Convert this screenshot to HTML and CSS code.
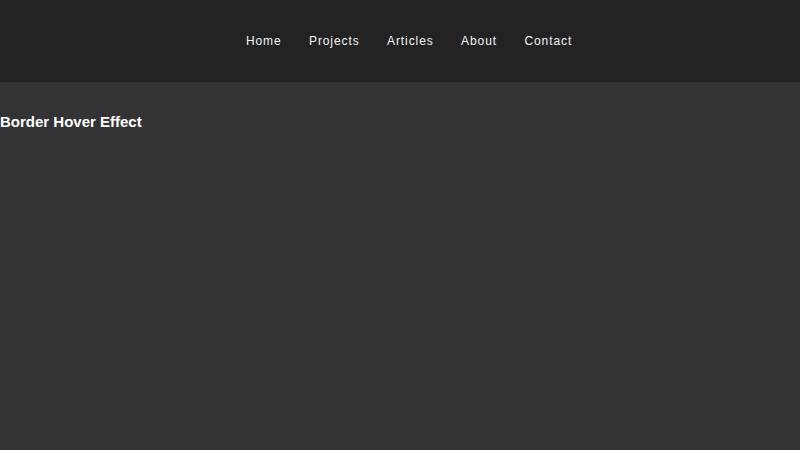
FILE: index.html
```html
<!DOCTYPE html>
<html>
<head>
<meta charset="utf-8">
<link rel="stylesheet" href="styles.css">
</head>
<body>
<header class="site-header">
  <nav class="nav">
    <a class="nav-link" href="#">Home</a>
    <a class="nav-link" href="#">Projects</a>
    <a class="nav-link" href="#">Articles</a>
    <a class="nav-link" href="#">About</a>
    <a class="nav-link" href="#">Contact</a>
  </nav>
</header>
<main class="content">
  <h1 class="title">Border Hover Effect</h1>
</main>
</body>
</html>
```
FILE: styles.css
```css
html, body {
  margin: 0;
  padding: 0;
  height: 100%;
}
body {
  background: #333335;
  font-family: "Liberation Sans", Arial, sans-serif;
  color: #ffffff;
}
.site-header {
  background: #232323;
  height: 82px;
  box-sizing: border-box;
  padding-top: 33px;
}
.nav {
  display: flex;
  justify-content: center;
  gap: 27.5px;
  padding-left: 18px;
}
.nav-link {
  color: #f5f5f5;
  text-decoration: none;
  font-size: 12px;
  letter-spacing: 0.9px;
  line-height: 17px;
}
.content {
  padding-top: 31px;
}
.title {
  margin: 0;
  font-size: 15px;
  font-weight: bold;
  line-height: 18px;
}
```
